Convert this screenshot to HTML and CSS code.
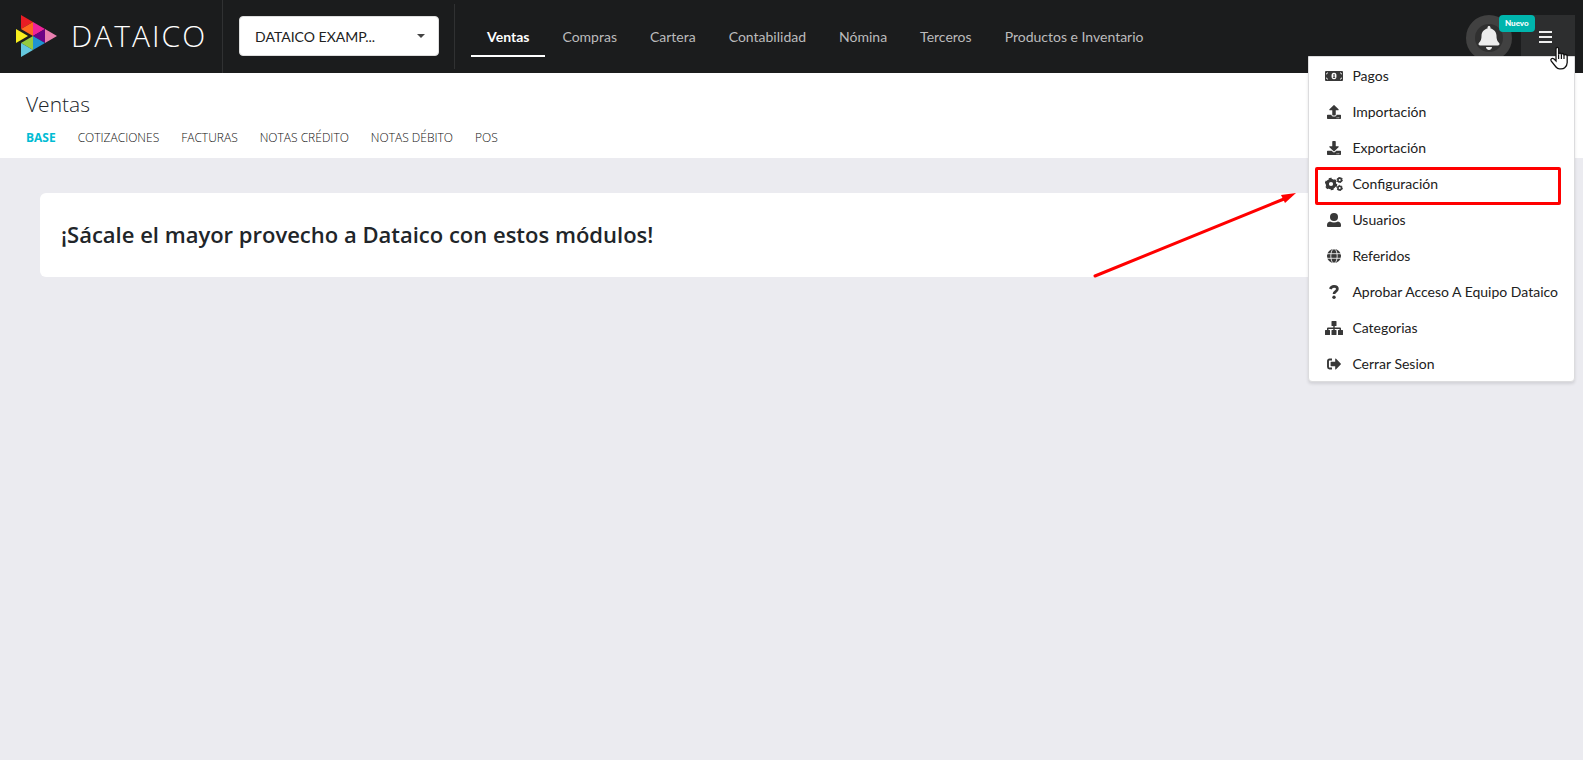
FILE: index.html
```html
<!DOCTYPE html>
<html lang="es">
<head>
<meta charset="utf-8">
<title>Dataico - Ventas</title>
<link rel="stylesheet" href="styles.css">
</head>
<body>
<header class="topbar">
  <a class="brand" href="#">
    <svg class="brand-mark" viewBox="0 0 41 42" aria-hidden="true">
      <path fill="#e81c24" d="M5 0L17 7L5 14z"/>
      <path fill="#ff671f" d="M5 14L17 7V21z"/>
      <path fill="#f0239a" d="M17 7L29 14L17 21z"/>
      <path fill="#6d0286" d="M29 14V28L17 21z"/>
      <path fill="#e97fb0" d="M29 14L41 21L29 28z"/>
      <path fill="#1f93d1" d="M17 21L29 28L17 35z"/>
      <path fill="#95ca3d" d="M17 21V35L5 28z"/>
      <path fill="#64c8de" d="M5 28L17 35L5 42z"/>
      <path fill="#f8ee1f" d="M0 14L12 21L0 28z"/>
    </svg>
    <span class="brand-name">DATAICO</span>
  </a>
  <div class="company">
    <select class="company-select" aria-label="Empresa">
      <option>DATAICO EXAMP...</option>
    </select>
    <svg class="caret" viewBox="0 0 8 4" aria-hidden="true"><path d="M0 0h8L4 4z"/></svg>
  </div>
  <nav class="main-nav" aria-label="Principal">
    <a class="nav-link active" href="#">Ventas</a>
    <a class="nav-link" href="#">Compras</a>
    <a class="nav-link" href="#">Cartera</a>
    <a class="nav-link" href="#">Contabilidad</a>
    <a class="nav-link" href="#">Nómina</a>
    <a class="nav-link" href="#">Terceros</a>
    <a class="nav-link" href="#">Productos e Inventario</a>
  </nav>
  <div class="tools">
    <button class="bell" aria-label="Notificaciones">
      <svg class="bell-icon" viewBox="0 0 448 512" aria-hidden="true"><path d="M224 512c35.320 0 63.970-28.650 63.970-64H160.030c0 35.350 28.650 64 63.970 64zm215.390-149.710c-19.320-20.760-55.470-51.990-55.470-154.290 0-77.700-54.480-139.900-127.940-155.160V32c0-17.670-14.320-32-31.980-32s-31.980 14.330-31.980 32v20.840C118.560 68.100 64.080 130.300 64.080 208c0 102.300-36.150 133.530-55.470 154.290-6 6.450-8.660 14.160-8.610 21.710.11 16.400 12.980 32 32.100 32h383.800c19.120 0 32-15.600 32.100-32 .05-7.550-2.610-15.270-8.610-21.710z"/></svg>
      <span class="badge">Nuevo</span>
    </button>
    <div class="menu-wrap">
      <button class="menu-button" aria-label="Menú">
        <svg class="burger" viewBox="0 0 13 12" aria-hidden="true"><path d="M0 0h13v2H0zM0 5h13v2H0zM0 10h13v2H0z"/></svg>
      </button>
      <ul class="menu">
        <li><a class="menu-item" href="#"><svg class="icon" viewBox="0 0 18 10"><rect width="18" height="10" rx="1"/><ellipse cx="9" cy="5" rx="2.500" ry="3.200" fill="#fff"/><path d="M8 3.800L9.600 2.800V6.200h.6v.9H7.900v-.9h.6V4.100L8 4.300z"/><path d="M1 3q1.500 0 1.500-1.500M17 3q-1.500 0-1.500-1.500M1 7q1.500 0 1.500 1.500M17 7q-1.500 0-1.500 1.500" fill="none" stroke="#fff" stroke-width=".9"/></svg>Pagos</a></li>
        <li><a class="menu-item" href="#"><svg class="icon" viewBox="0 0 512 512"><path d="M296 384h-80c-13.300 0-24-10.700-24-24V192h-87.700c-17.800 0-26.700-21.500-14.100-34.100L242.300 5.700c7.500-7.500 19.800-7.500 27.300 0l152.200 152.200c12.600 12.600 3.700 34.100-14.100 34.100H320v168c0 13.300-10.700 24-24 24zm216-8v112c0 13.300-10.700 24-24 24H24c-13.300 0-24-10.700-24-24V376c0-13.300 10.700-24 24-24h136v8c0 30.900 25.100 56 56 56h80c30.900 0 56-25.100 56-56v-8h136c13.300 0 24 10.700 24 24zm-124 88c0-11-9-20-20-20s-20 9-20 20 9 20 20 20 20-9 20-20zm64 0c0-11-9-20-20-20s-20 9-20 20 9 20 20 20 20-9 20-20z"/></svg>Importación</a></li>
        <li><a class="menu-item" href="#"><svg class="icon" viewBox="0 0 512 512"><path d="M216 0h80c13.300 0 24 10.700 24 24v168h87.700c17.800 0 26.700 21.500 14.100 34.100L269.700 378.300c-7.500 7.500-19.800 7.500-27.300 0L90.100 226.100c-12.600-12.600-3.700-34.100 14.100-34.100H192V24c0-13.300 10.700-24 24-24zm296 376v112c0 13.300-10.700 24-24 24H24c-13.300 0-24-10.700-24-24V376c0-13.300 10.700-24 24-24h146.700l49 49c20.100 20.100 52.500 20.100 72.600 0l49-49H488c13.300 0 24 10.700 24 24zm-124 88c0-11-9-20-20-20s-20 9-20 20 9 20 20 20 20-9 20-20zm64 0c0-11-9-20-20-20s-20 9-20 20 9 20 20 20 20-9 20-20z"/></svg>Exportación</a></li>
        <li class="marked"><a class="menu-item" href="#"><svg class="icon" viewBox="0 0 18 14"><g fill="none" stroke="currentColor"><circle cx="6" cy="7" r="3.700" stroke-width="3.200"/><circle cx="6" cy="7" r="5.500" stroke-width="1.500" stroke-dasharray="2.900 2.860"/><circle cx="14.700" cy="2.900" r="1.800" stroke-width="1.600"/><circle cx="14.700" cy="2.900" r="2.700" stroke-width="1" stroke-dasharray="1.500 1.320"/><circle cx="14.700" cy="11.100" r="1.800" stroke-width="1.600"/><circle cx="14.700" cy="11.100" r="2.700" stroke-width="1" stroke-dasharray="1.500 1.320"/></g></svg>Configuración</a>
          <svg class="pointer-arrow" viewBox="0 0 204 86" aria-hidden="true"><path d="M2 84L191 7" fill="none" stroke="#f00" stroke-width="3" stroke-linecap="round"/><path fill="#f00" d="M203 1L188 3L192 11z"/></svg>
        </li>
        <li><a class="menu-item" href="#"><svg class="icon" viewBox="0 0 14 14"><circle cx="7" cy="4" r="4"/><path d="M3 8.500Q7 10.500 11 8.500Q14 9 14 12v1q0 1-1 1H1q-1 0-1-1v-1Q0 9 3 8.500z"/></svg>Usuarios</a></li>
        <li><a class="menu-item" href="#"><svg class="icon" viewBox="0 0 14 14"><circle cx="7" cy="7" r="7"/><g fill="none" stroke="#fff" stroke-width=".8"><path d="M0 4.700h14M0 9.300h14"/><ellipse cx="7" cy="7" rx="3.200" ry="7.200"/></g></svg>Referidos</a></li>
        <li><a class="menu-item" href="#"><svg class="icon" viewBox="0 0 10 14"><path d="M1.300 4C2 2 3.300 1.400 5 1.400c2 0 3.400 1 3.400 2.700C8.400 6.300 5 6.300 5 8.900" fill="none" stroke="currentColor" stroke-width="2.700"/><circle cx="5" cy="12.300" r="1.700"/></svg>Aprobar Acceso A Equipo Dataico</a></li>
        <li><a class="menu-item" href="#"><svg class="icon" viewBox="0 0 18 14"><path d="M7 0h4q.5 0 .5.500v4q0 .5-.5.500h-1.300v1.500H15q1 0 1 1V9h1.500q.5 0 .5.500v4q0 .5-.5.500h-4q-.5 0-.5-.5v-4q0-.5.5-.5h1V7.900H9.700V9H11q.5 0 .5.500v4q0 .5-.5.500H7q-.5 0-.5-.5v-4Q6.500 9 7 9h1.300V7.900H3.500V9h1q.5 0 .5.500v4q0 .5-.5.500h-4Q0 14 0 13.500v-4Q0 9 .5 9H2V7.500q0-1 1-1h5.300V5H7q-.5 0-.5-.5v-4Q6.500 0 7 0z"/></svg>Categorias</a></li>
        <li><a class="menu-item" href="#"><svg class="icon" viewBox="0 0 14 14"><path d="M5 2.500H2.500Q1 2.500 1 4v6q0 1.500 1.500 1.500H5" fill="none" stroke="currentColor" stroke-width="1.900"/><path d="M4.200 4.800h4V2q0-1 .9-.3l4.600 4.700q.5.600 0 1.200l-4.600 4.700q-.9.700-.9-.3V9.200h-4q-.6 0-.6-.6V5.400q0-.6.6-.6z"/></svg>Cerrar Sesion</a></li>
      </ul>
      <svg class="cursor" viewBox="0 0 18 23" aria-hidden="true"><path d="M6 13V2.500Q6 .8 7.300.8T8.600 2.500V8Q8.800 6.500 10 6.500t1.400 1.700Q11.600 7 12.700 7t1.300 1.800Q14.200 8 15.500 8q1.700 0 1.700 2v6q0 3-2.500 5.200Q13.500 22.400 11 22.400H9.500Q7.500 22.400 6 20.500L1.300 14.600Q.4 13 1.500 12.200t2.600.4L6 14.500z" fill="#fff" stroke="#111" stroke-width="1.300"/><path d="M8.600 8v4.500M11.400 8v4.500M14 8.500v4" fill="none" stroke="#111" stroke-width="1.200"/></svg>
    </div>
  </div>
</header>
<section class="subheader">
  <h1 class="page-title">Ventas</h1>
  <nav class="tabs" aria-label="Secciones de ventas">
    <a class="tab current" href="#">BASE</a>
    <a class="tab" href="#">COTIZACIONES</a>
    <a class="tab" href="#">FACTURAS</a>
    <a class="tab" href="#">NOTAS CRÉDITO</a>
    <a class="tab" href="#">NOTAS DÉBITO</a>
    <a class="tab" href="#">POS</a>
  </nav>
</section>
<main class="content">
  <section class="card">
    <h2 class="card-title">¡Sácale el mayor provecho a Dataico con estos módulos!</h2>
  </section>
</main>
</body>
</html>
```
FILE: styles.css
```css
* { box-sizing: border-box; }
body {
  margin: 0;
  min-height: 100vh;
  background: #ebebf0;
  color: #212529;
  font-family: Lato, "Liberation Sans", sans-serif;
  font-size: 14px;
}
a { color: inherit; text-decoration: none; }
button { border: 0; padding: 0; font: inherit; cursor: pointer; }

.topbar {
  display: flex;
  align-items: stretch;
  height: 73px;
  background: #1b1c1d;
  color: #fff;
}
.brand {
  display: flex;
  align-items: center;
  gap: 14px;
  padding: 0 15px 1px 16px;
  border-right: 1px solid #303132;
}
.brand-mark { width: 41px; height: 42px; }
.brand-name {
  font: 300 30px/40px "Open Sans", sans-serif;
  letter-spacing: 2px;
}
.company {
  position: relative;
  display: flex;
  align-items: center;
  margin: 4px 0;
  padding: 0 15px 1px 16px;
  border-right: 1px solid #303132;
}
.company-select {
  appearance: none;
  width: 200px;
  height: 40px;
  padding: 0 15px;
  border: 1px solid #dedede;
  border-radius: 4px;
  background: #fff;
  color: #212121;
  font: 14px Lato, sans-serif;
}
.caret {
  position: absolute;
  right: 29px;
  width: 8px;
  height: 4px;
  fill: #444;
  pointer-events: none;
}
.main-nav { display: flex; align-items: center; gap: 1px; padding-left: 16px; }
.nav-link {
  padding: 2px 16px 0;
  border-bottom: 2px solid transparent;
  color: #bbbbbc;
  line-height: 37px;
}
.nav-link.active { border-color: #fff; color: #fff; font-weight: 700; }

.tools {
  display: flex;
  align-items: flex-start;
  gap: 9px;
  margin-left: auto;
  padding: 15px 8px 0 0;
}
.bell {
  position: relative;
  display: grid;
  place-items: center;
  width: 46px;
  height: 46px;
  border: 9px solid #414141;
  border-radius: 50%;
  background: #303030;
}
.bell-icon { width: 22px; height: 24px; fill: #ececec; }
.badge {
  position: absolute;
  z-index: 1;
  top: -9px;
  left: 24px;
  padding: 0 6px;
  border-radius: 4px;
  background: #00b5ad;
  color: #fff;
  font-size: 8px;
  font-weight: 900;
  line-height: 17px;
}
.menu-wrap { position: relative; }
.menu-button {
  display: grid;
  place-items: center;
  width: 54px;
  height: 41px;
  padding: 3px 5px 0 0;
  background: #2d2e2f;
}
.burger { width: 13px; height: 12px; fill: #eee; }

.menu {
  position: absolute;
  z-index: 2;
  top: 100%;
  right: 0;
  margin: 0;
  padding: 0;
  list-style: none;
  border: 1px solid #dcdcde;
  border-radius: 0 0 4px 4px;
  background: #fff;
  color: #212121;
  box-shadow: 0 2px 3px rgba(34, 36, 38, .12);
}
.menu-item {
  display: flex;
  align-items: center;
  gap: 9px;
  height: 36px;
  padding: 0 16px;
  white-space: nowrap;
}
.icon {
  flex: none;
  width: 18px;
  height: 14px;
  margin-top: 2px;
  fill: #383838;
  color: #383838;
}
.marked { position: relative; }
.marked::before {
  content: "";
  position: absolute;
  top: 2px;
  right: 13px;
  bottom: -4px;
  left: 6px;
  border: 3px solid #f00;
  border-radius: 2px;
  pointer-events: none;
}
.pointer-arrow {
  position: absolute;
  top: 27px;
  right: calc(100% + 12px);
  width: 204px;
  height: 86px;
}
.cursor { position: absolute; z-index: 3; top: 31px; right: 7px; width: 18px; height: 24px; }

.subheader {
  padding: 15px 26px 7px;
  background: #fff;
}
.page-title {
  margin: 0 0 4px;
  font: 300 21px/32px "Open Sans", sans-serif;
}
.tabs {
  display: flex;
  gap: 22px;
  color: #111;
  font: 300 12px/27px "Open Sans", sans-serif;
}
.current { color: #00bcd4; font-weight: 700; }

.content { padding: 35px 40px; }
.card {
  padding: 25px 21px 27px;
  border-radius: 6px;
  background: #fff;
}
.card-title {
  margin: 0;
  font: 540 22px/32px "Open Sans", sans-serif;
}
```
